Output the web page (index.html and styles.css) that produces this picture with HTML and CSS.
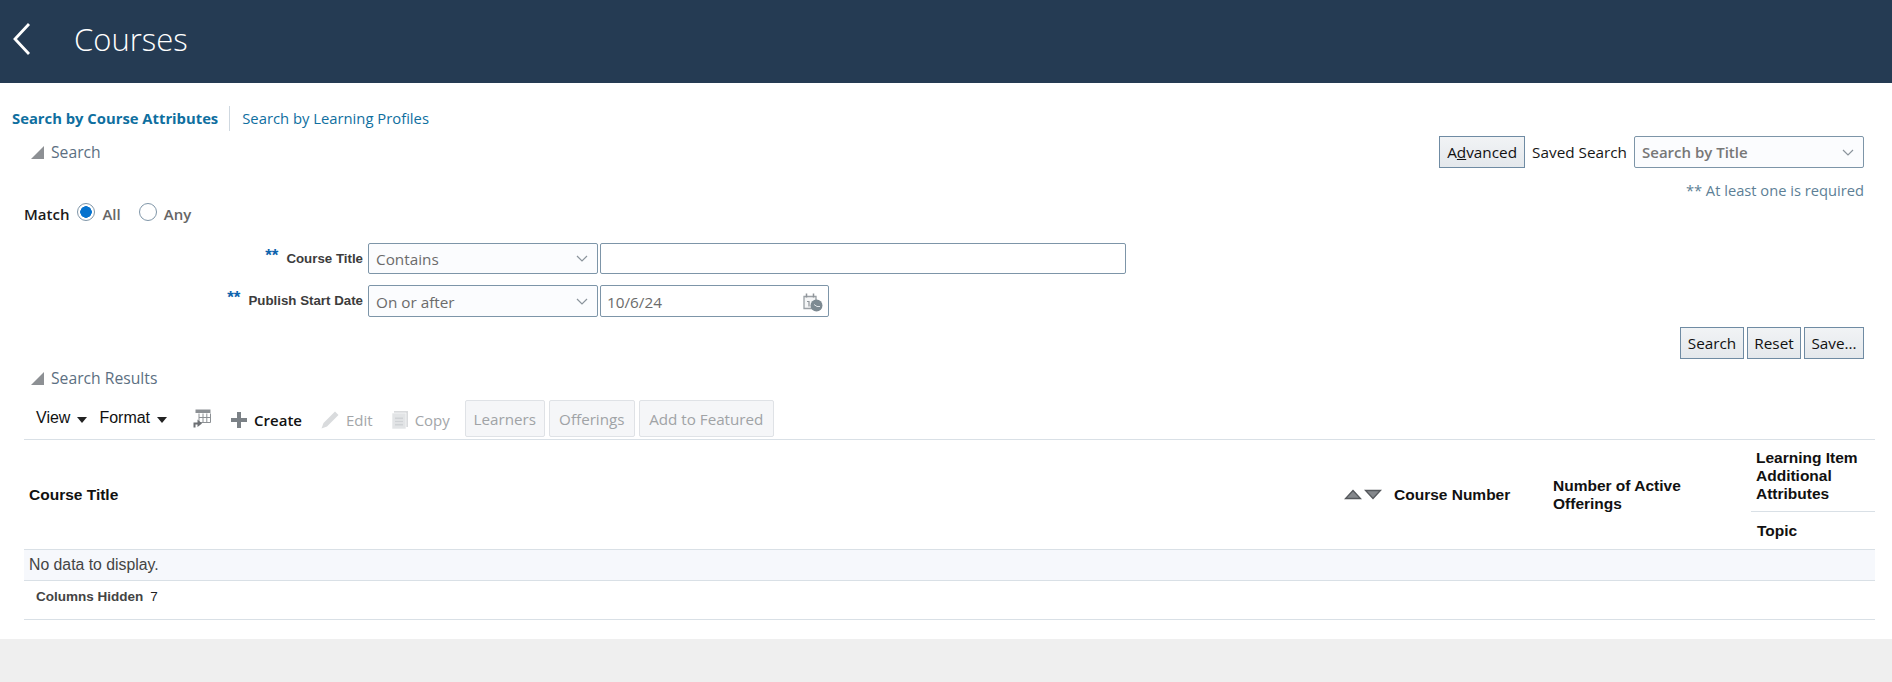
FILE: index.html
```html
<!DOCTYPE html>
<html lang="en">
<head>
<meta charset="utf-8">
<title>Courses</title>
<link rel="stylesheet" href="styles.css">
</head>
<body>
<header class="topbar">
  <svg class="back" width="20" height="34" viewBox="0 0 20 34"><path d="M17 2 L3 17 L17 32" fill="none" stroke="#fff" stroke-width="2.8"/></svg>
  <h1 class="page-title">Courses</h1>
</header>
<main class="content">
  <nav class="tabs">
    <a class="tab tab-active">Search by Course Attributes</a>
    <a class="tab tab-plain">Search by Learning Profiles</a>
  </nav>
  <section class="search">
    <div class="search-head">
      <div class="section-title">
        <svg class="disclosure" width="13" height="13" viewBox="0 0 13 13"><path d="M13 0V13H0Z" fill="#8d9094"/></svg>
        <span>Search</span>
      </div>
      <div class="saved">
        <button class="btn"><span>A<u>d</u>vanced</span></button>
        <span class="saved-label">Saved Search</span>
        <div class="field select saved-select"><span>Search by Title</span><svg class="chev" width="12" height="7" viewBox="0 0 12 7"><path d="M1 1l5 5 5-5" fill="none" stroke="#8b949c" stroke-width="1.2"/></svg></div>
      </div>
    </div>
    <p class="required-note">** At least one is required</p>
    <div class="match">
      <span class="match-label">Match</span>
      <span class="radio radio-on"></span><span class="radio-text">All</span>
      <span class="radio radio-off"></span><span class="radio-text">Any</span>
    </div>
    <div class="form-row">
      <label class="form-label"><span class="stars">**</span>Course Title</label>
      <div class="field select"><span>Contains</span><svg class="chev" width="12" height="7" viewBox="0 0 12 7"><path d="M1 1l5 5 5-5" fill="none" stroke="#8b949c" stroke-width="1.2"/></svg></div>
      <div class="field text-input"></div>
    </div>
    <div class="form-row form-row-2">
      <label class="form-label"><span class="stars">**</span>Publish Start Date</label>
      <div class="field select"><span>On or after</span><svg class="chev" width="12" height="7" viewBox="0 0 12 7"><path d="M1 1l5 5 5-5" fill="none" stroke="#8b949c" stroke-width="1.2"/></svg></div>
      <div class="field date-input"><span>10/6/24</span>
        <svg class="cal" width="20" height="19" viewBox="0 0 20 19"><path d="M1 3.500h12v12H1z" fill="#f4f5f6" stroke="#9aa0a5" stroke-width="1.300"/><path d="M3.500 0.500v4M10.500 0.500v4" stroke="#8f959a" stroke-width="1.500"/><path d="M4 8.500h2v5" fill="none" stroke="#8f959a" stroke-width="1.200"/><circle cx="13.500" cy="12.500" r="6" fill="#7d8a92"/><path d="M11 11.500l3 2h3" fill="none" stroke="#dfe3e6" stroke-width="1"/></svg>
      </div>
    </div>
    <div class="actions">
      <button class="btn b-search">Search</button>
      <button class="btn b-reset">Reset</button>
      <button class="btn b-save">Save...</button>
    </div>
  </section>
  <section class="results">
    <div class="section-title results-title">
      <svg class="disclosure" width="13" height="13" viewBox="0 0 13 13"><path d="M13 0V13H0Z" fill="#8d9094"/></svg>
      <span>Search Results</span>
    </div>
    <div class="toolbar">
      <span class="menu">View<i class="caret"></i></span>
      <span class="menu menu-format">Format<i class="caret"></i></span>
      <svg class="tb-freeze" width="18" height="19" viewBox="0 0 18 19"><path d="M2.500 0.500H17.500V4H2.500z" fill="#8c9094"/><path d="M6 4.500V13.500H17.500V4.500M6 8.500h11.500M10 4.500v9M13.800 4.500v9" fill="none" stroke="#8c9094" stroke-width="1"/><path d="M1.500 18.500V14.500H6" fill="none" stroke="#6d7074" stroke-width="2"/><path d="M4.500 10.500L9 14.500 4.500 18z" fill="#6d7074"/></svg>
      <span class="tool tool-create"><svg width="16" height="16" viewBox="0 0 16 16"><path d="M6 0h4v6h6v4h-6v6H6v-6H0V6h6z" fill="#7b8186"/></svg>Create</span>
      <span class="tool tool-off tool-edit"><svg width="18" height="18" viewBox="0 0 18 18"><path d="M14 0.500l3.500 3.500L6 15.500 0.500 17.500 2.500 12z" fill="#d9dbdd"/></svg>Edit</span>
      <span class="tool tool-off tool-copy"><svg width="16" height="18" viewBox="0 0 16 18"><path d="M2 0h14v16H2z" fill="#d9dbdd"/><path d="M0 2h14v16H0z" fill="#e2e4e6" stroke="#fff" stroke-width=".6"/><path d="M3 6.500h8v8H3z" fill="#cfd2d5"/><path d="M3 9h8M3 12h8" stroke="#f0f1f2" stroke-width="1"/></svg>Copy</span>
      <button class="btn-off b-learners">Learners</button>
      <button class="btn-off b-offerings">Offerings</button>
      <button class="btn-off b-featured">Add to Featured</button>
    </div>
    <div class="table">
      <div class="th th-title">
        <span>Course Title</span>
        <span class="sorters">
          <svg width="18" height="11" viewBox="0 0 18 11"><path d="M9 1.500L16.500 9.500H1.500z" fill="#85888c" stroke="#55585c" stroke-width="1.300"/></svg>
          <svg width="18" height="11" viewBox="0 0 18 11"><path d="M1.500 1.500H16.500L9 9.500z" fill="#85888c" stroke="#55585c" stroke-width="1.300"/></svg>
        </span>
      </div>
      <div class="th th-number">Course Number</div>
      <div class="th th-offer">Number of Active<br>Offerings</div>
      <div class="th-group">
        <div class="group-top">Learning Item<br>Additional<br>Attributes</div>
        <div class="group-bottom">Topic</div>
      </div>
    </div>
    <div class="empty-row">No data to display.</div>
    <div class="table-status"><b>Columns Hidden</b><span class="hidden-count">7</span></div>
  </section>
</main>
<div class="page-foot"></div>
</body>
</html>
```
FILE: styles.css
```css
* { box-sizing: border-box; }
html, body { margin: 0; padding: 0; }
body { height: 682px; overflow: hidden; background: #fff; font-family: "Open Sans", "Noto Sans", sans-serif; color: #222; display: flex; flex-direction: column; }

.topbar { height: 83px; background: #253b53; display: flex; align-items: center; flex: none; }
.back { margin-left: 12px; margin-top: -6px; }
.page-title { margin: -6px 0 0 42px; font-size: 31px; font-weight: 300; color: #fff; line-height: 40px; }

.content { height: 556px; flex: none; padding: 0 17px 0 12px; }
.tabs { display: flex; align-items: center; height: 25px; margin-top: 23px; font-size: 14.800px; }
.tab { color: #0f6f9f; }
.tab-plain { margin-top: -2px; margin-left: 1px; }
.tab-active { font-weight: 700; padding-right: 11px; border-right: 1px solid #cfd8e0; height: 25px; line-height: 24px; margin-right: 11px; }

.search { padding-left: 12px; }
.search-head { display: flex; justify-content: space-between; align-items: center; height: 32px; margin-top: 5px; margin-right: 11px; }
.section-title { display: flex; align-items: center; gap: 7px; padding-left: 7px; font-size: 15.700px; color: #5c6f82; }
.saved { display: flex; align-items: center; }
.saved-label { margin: 0 7px; font-size: 15.300px; color: #161616; font-weight: 500; }
.btn { height: 32px; padding: 0; border: 1px solid #6f8ba3; background: linear-gradient(#f1f3f5, #e4e8ec); font: 500 15.300px "Open Sans", sans-serif; color: #111; }
.saved .btn { width: 86px; }

.field { border: 1px solid #7d95a8; border-radius: 2px; background: #fbfcfe; font-size: 15.300px; color: #6b6b6b; display: flex; align-items: center; height: 31px; }
.select { width: 230px; padding: 0 9px 0 7px; justify-content: space-between; }
.saved-select { width: 230px; height: 32px; font-size: 15px; font-weight: 600; color: #777; }
.text-input { width: 526px; margin-left: 2px; background: #fff; }
.date-input { width: 229px; margin-left: 2px; padding: 0 5px 0 6px; justify-content: space-between; background: #fff; }
.cal { margin-top: 1px; }

.required-note { margin: 12px 11px 0 0; height: 20px; line-height: 20px; text-align: right; font-size: 14.700px; color: #5d7f96; }

.match { display: flex; align-items: center; height: 22px; margin-top: 3px; font-size: 15px; }
.match-label { color: #1b1b1b; font-weight: 600; margin-right: 8px; }
.radio { width: 18px; height: 18px; border-radius: 50%; border: 1px solid #7f96a8; background: #fff; margin-top: -4px; }
.radio-on { background: radial-gradient(circle, #0572ce 0 5.500px, #fff 6px); }
.radio-text { color: #666; font-weight: 600; margin: 0 18px 0 7px; }

.form-row { display: flex; align-items: center; margin-top: 18px; height: 31px; }
.form-row-2 { margin-top: 11px; height: 32px; }
.form-row-2 .field { height: 32px; padding-top: 1px; }
.form-label { width: 344px; padding-right: 5px; text-align: right; font: 700 13.300px "Liberation Sans", Arial, sans-serif; color: #3c3c3c; margin-top: -2px; flex: none; }
.stars { color: #0d63ad; font-size: 17px; margin-right: 8px; position: relative; top: -2px; }

.actions { display: flex; justify-content: flex-end; gap: 3px; margin-top: 10px; margin-right: 11px; }
.b-search { width: 64px; }
.b-reset { width: 54px; }
.b-save { width: 60px; }

.results { padding-left: 12px; margin-top: 8px; }
.results-title { height: 22px; }

.toolbar { display: flex; align-items: center; height: 39px; margin-top: 11px; font-size: 15px; }
.menu { font: 16px "Liberation Sans", Arial, sans-serif; color: #111; display: inline-flex; align-items: center; margin-left: 12px; margin-top: -3px; }
.menu-format { margin-left: 12px; }
.caret { width: 0; height: 0; border-left: 5.500px solid transparent; border-right: 5.500px solid transparent; border-top: 6px solid #222; margin-left: 7px; margin-top: 3px; }
.tb-freeze { margin-left: 26px; margin-top: -2px; }
.tool { display: inline-flex; align-items: center; gap: 7px; font-weight: 500; }
.tool-create { margin-left: 20px; color: #111; font-weight: 600; }
.tool-edit { margin-left: 19px; }
.tool-copy { margin-left: 19px; }
.tool-off { color: #a3a6a9; }
.btn-off { height: 37px; margin-left: 4px; margin-top: -3px; padding: 2px 0 0; background: #f5f6f8; border: 1px solid #dfe2e6; border-radius: 2px; font: 500 15.200px "Open Sans", sans-serif; color: #a0a3a6; }
.b-learners { width: 80px; margin-left: 15px; }
.b-offerings { width: 86px; }
.b-featured { width: 135px; }

.table { display: grid; grid-template-columns: 1370px 159px 198px 1fr; height: 111px; border-top: 1px solid #d9e0e6; border-bottom: 1px solid #d9e0e6; font: 700 15.500px "Liberation Sans", Arial, sans-serif; color: #111; }
.th { display: flex; align-items: center; line-height: 18px; }
.th-title { padding-left: 5px; justify-content: space-between; padding-right: 12px; }
.sorters { display: flex; gap: 2px; }
.th-group { display: flex; flex-direction: column; }
.group-top { height: 72px; line-height: 18px; padding-left: 5px; padding-top: 9px; border-bottom: 1px solid #d9e0e6; }
.group-bottom { flex: 1; display: flex; align-items: center; padding-left: 6px; }

.empty-row { height: 31px; background: #f6f8fc; border-bottom: 1px solid #d9e0e6; padding-left: 5px; font: 15.800px/30px "Liberation Sans", Arial, sans-serif; color: #444; }
.table-status { height: 39px; border-bottom: 1px solid #d9e0e6; padding-left: 12px; padding-top: 8px; font: 13.500px "Liberation Sans", Arial, sans-serif; color: #444; display: flex; gap: 7px; align-items: flex-start; }
.hidden-count { color: #222; }

.page-foot { flex: 1; background: #efefef; }
```
